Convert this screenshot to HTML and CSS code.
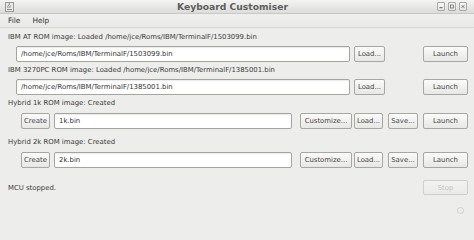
FILE: index.html
```html
<!DOCTYPE html>
<html>
<head>
<meta charset="utf-8">
<link rel="stylesheet" href="styles.css">
</head>
<body>
<div class="window">
  <div class="titlebar">
    <div class="appicon">
      <svg width="9" height="10" viewBox="0 0 9 10"><rect x="0.5" y="0.5" width="8" height="9" fill="#e8e8e8" stroke="#9a9a9a"/><path d="M2 7.5 h5 M3 6 q-1 -2 1 -3 q1 -1 0 -2 M5 6 q-1 -1.5 1 -2.5" fill="none" stroke="#777" stroke-width="0.8"/></svg>
    </div>
    <div class="title">Keyboard Customiser</div>
    <div class="wbtns">
      <span class="wbtn"><svg width="8" height="8" viewBox="0 0 8 8"><path d="M2 5.5 h4" stroke="#555" stroke-width="1.2"/></svg></span>
      <span class="wbtn"><svg width="8" height="8" viewBox="0 0 8 8"><rect x="2" y="2" width="4" height="4" fill="none" stroke="#555" stroke-width="0.9"/></svg></span>
      <span class="wbtn"><svg width="8" height="8" viewBox="0 0 8 8"><path d="M2.2 2.2 L5.8 5.8 M5.8 2.2 L2.2 5.8" stroke="#555" stroke-width="1"/></svg></span>
    </div>
  </div>
  <div class="menubar">
    <span class="menu">File</span>
    <span class="menu">Help</span>
  </div>
  <div class="content">
    <div class="label">IBM AT ROM image: Loaded /home/jce/Roms/IBM/TerminalF/1503099.bin</div>
    <div class="row rom">
      <div class="field">/home/jce/Roms/IBM/TerminalF/1503099.bin</div>
      <button class="btn load">Load...</button>
      <button class="btn launch">Launch</button>
    </div>
    <div class="label">IBM 3270PC ROM image: Loaded /home/jce/Roms/IBM/TerminalF/1385001.bin</div>
    <div class="row rom">
      <div class="field">/home/jce/Roms/IBM/TerminalF/1385001.bin</div>
      <button class="btn load">Load...</button>
      <button class="btn launch">Launch</button>
    </div>
    <div class="label hyb">Hybrid 1k ROM image: Created</div>
    <div class="row hybrid">
      <button class="btn create">Create</button>
      <div class="field">1k.bin</div>
      <button class="btn customize">Customize...</button>
      <button class="btn hload">Load...</button>
      <button class="btn save">Save...</button>
      <button class="btn launch">Launch</button>
    </div>
    <div class="label hyb2">Hybrid 2k ROM image: Created</div>
    <div class="row hybrid">
      <button class="btn create">Create</button>
      <div class="field">2k.bin</div>
      <button class="btn customize">Customize...</button>
      <button class="btn hload">Load...</button>
      <button class="btn save">Save...</button>
      <button class="btn launch">Launch</button>
    </div>
    <div class="status">
      <span class="statustext">MCU stopped.</span>
      <button class="btn launch disabled">Stop</button>
    </div>
    <div class="footer"><span class="ring"></span></div>
  </div>
</div>
</body>
</html>
```
FILE: styles.css
```css
* { box-sizing: border-box; }
html, body { margin: 0; padding: 0; }
body {
  width: 474px;
  height: 217px;
  overflow: hidden;
  background: #ededeb;
  font-family: "DejaVu Sans", sans-serif;
  font-size: 6.9px;
  color: #3a3a3a;
}
.window { width: 474px; height: 217px; display: flex; flex-direction: column; }
.titlebar {
  height: 14px;
  display: flex;
  align-items: center;
  padding: 0 5px;
  background: linear-gradient(#f4f4f2, #dcdcda);
  border-bottom: 1px solid #c8c8c6;
}
.appicon { width: 9px; height: 10px; display: flex; }
.title {
  flex: 1;
  text-align: center;
  font-weight: bold;
  font-size: 9.2px;
  color: #5e5e5e;
  padding-left: 14px;
}
.wbtns { display: flex; gap: 3px; padding-right: 2px; }
.wbtn {
  width: 8px; height: 9px;
  border: 1px solid #a8a8a6;
  border-radius: 1px;
  background: linear-gradient(#fafafa, #e2e2e0);
  display: flex; align-items: center; justify-content: center;
}
.wbtn svg { width: 6px; height: 7px; }
.menubar {
  height: 14px;
  display: flex;
  align-items: center;
  gap: 12px;
  padding-left: 8px;
  background: linear-gradient(#efefed, #e9e9e7);
  border-bottom: 1px solid #d6d6d4;
  color: #333;
  font-size: 7.4px;
}
.content { flex: 1; display: flex; flex-direction: column; padding-top: 4px; }
.label { height: 11px; line-height: 11px; padding-left: 8px; white-space: nowrap; }
.row { display: flex; align-items: center; height: 16px; margin-top: 3px; margin-bottom: 3px; padding-right: 6px; }
.rom { padding-left: 16px; }
.hybrid { padding-left: 21px; }
.hyb { margin-top: 0; margin-bottom: 1px; }
.hyb2 { margin-top: 5px; margin-bottom: 1px; }
.field {
  flex: 1;
  height: 16px;
  background: #fff;
  border: 1px solid #a4a4a2;
  border-radius: 2px;
  box-shadow: inset 0 1px 1px rgba(0,0,0,0.08);
  padding-left: 4px;
  line-height: 14px;
  white-space: nowrap;
  color: #333;
}
.btn {
  height: 16px;
  padding: 0;
  font-family: "DejaVu Sans", sans-serif;
  font-size: 6.9px;
  color: #444;
  border: 1px solid #a6a6a4;
  border-radius: 2px;
  background: linear-gradient(#fbfbfa, #e7e7e5);
  text-align: center;
  line-height: 14px;
}
.load { width: 31px; margin-left: 4px; }
.launch { width: 45px; margin-left: auto; }
.rom .launch { margin-left: 38px; }
.create { width: 29px; margin-right: 4px; }
.customize { width: 52px; margin-left: 8px; }
.hload { width: 29px; margin-left: 2px; }
.save { width: 30px; margin-left: 5px; }
.hybrid .launch { margin-left: 5px; }
.status {
  display: flex;
  align-items: center;
  height: 15px;
  margin-top: 9px;
  padding-left: 8px;
  padding-right: 6px;
}
.statustext { flex: 1; }
.disabled { color: #c4c4c2; border-color: #cfcfcd; background: linear-gradient(#f2f2f0, #eaeae8); height: 15px; }
.footer { display: flex; justify-content: flex-end; padding-right: 10px; margin-top: 12px; }
.ring { width: 7px; height: 7px; border: 1px solid #cfcfcd; border-radius: 50%; }
```
